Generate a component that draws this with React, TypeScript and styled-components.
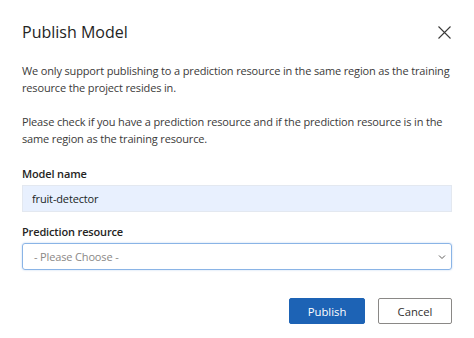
import React from "react"
import styled, { createGlobalStyle } from "styled-components"

const GlobalStyle = createGlobalStyle`
  html, body {
    margin: 0;
    background: #ffffff;
  }
  body {
    font-family: "Open Sans", "Noto Sans", sans-serif;
    color: #323130;
  }
`

const Dialog = styled.div`
  width: 474px;
  height: 338px;
  box-sizing: border-box;
  padding: 18px 22px 0 22px;
  display: flex;
  flex-direction: column;
`

const Header = styled.div`
  display: flex;
  align-items: center;
  justify-content: space-between;
  height: 28px;
`

const Title = styled.h1`
  margin: 0;
  font-size: 16px;
  font-weight: 400;
  color: #252423;
`

const CloseButton = styled.button`
  border: 0;
  background: transparent;
  padding: 0;
  width: 16px;
  height: 16px;
  display: flex;
  align-items: center;
  justify-content: center;
  cursor: pointer;
`

const Paragraph = styled.p`
  margin: 0;
  font-size: 11px;
  letter-spacing: -0.15px;
  line-height: 16.5px;
  color: #3b3a39;
  &:first-of-type {
    margin-top: 17px;
  }
  & + & {
    margin-top: 18px;
  }
`

const Field = styled.div<{ $top: number }>`
  display: flex;
  flex-direction: column;
  gap: 3px;
  margin-top: ${(p) => p.$top}px;
`

const Label = styled.label`
  font-size: 11px;
  letter-spacing: -0.15px;
  font-weight: 600;
  color: #252423;
  line-height: 16px;
`

const TextInput = styled.input`
  box-sizing: border-box;
  height: 27px;
  border: 1px solid #e3e8f0;
  background: #e8f0fe;
  padding: 0 9px;
  font-family: inherit;
  font-size: 11px;
  letter-spacing: -0.15px;
  color: #201f1e;
  border-radius: 0;
  outline: none;
`

const SelectBox = styled.div`
  position: relative;
  height: 27px;
  box-sizing: border-box;
  border: 1px solid #8ab4e6;
  border-radius: 3px;
  box-shadow: 0 0 2px rgba(100, 150, 220, 0.45);
  display: flex;
  align-items: center;
  padding: 0 11px;
  font-size: 11px;
  letter-spacing: -0.15px;
  color: #8a8886;
`

const Chevron = styled.svg`
  position: absolute;
  right: 5px;
  top: 10px;
`

const Actions = styled.div`
  display: flex;
  justify-content: flex-end;
  gap: 13px;
  margin-top: 28px;
`

const Button = styled.button<{ $primary?: boolean }>`
  box-sizing: border-box;
  width: ${(p) => (p.$primary ? 76 : 74)}px;
  height: 26px;
  border-radius: 2px;
  font-family: inherit;
  font-size: 11.3px;
  cursor: pointer;
  border: 1px solid ${(p) => (p.$primary ? "#1d63b5" : "#8a8886")};
  background: ${(p) => (p.$primary ? "#1d63b5" : "#ffffff")};
  color: ${(p) => (p.$primary ? "#ffffff" : "#323130")};
`

export default function App() {
  return (
    <>
      <GlobalStyle />
      <Dialog>
        <Header>
          <Title>Publish Model</Title>
          <CloseButton aria-label="Close">
            <svg width="13" height="13" viewBox="0 0 13 13">
              <path d="M0.5 0.5 L12.5 12.5 M12.5 0.5 L0.5 12.5" stroke="#3b3a39" strokeWidth="1.1" />
            </svg>
          </CloseButton>
        </Header>
        <Paragraph>
          We only support publishing to a prediction resource in the same region as the training
          resource the project resides in.
        </Paragraph>
        <Paragraph>
          Please check if you have a prediction resource and if the prediction resource is in the
          same region as the training resource.
        </Paragraph>
        <Field $top={19}>
          <Label>Model name</Label>
          <TextInput defaultValue="fruit-detector" />
        </Field>
        <Field $top={12}>
          <Label>Prediction resource</Label>
          <SelectBox>
            - Please Choose -
            <Chevron width="8" height="6" viewBox="0 0 8 6">
              <path d="M1 1.5 L4 4.5 L7 1.5" fill="none" stroke="#605e5c" strokeWidth="1" />
            </Chevron>
          </SelectBox>
        </Field>
        <Actions>
          <Button $primary>Publish</Button>
          <Button>Cancel</Button>
        </Actions>
      </Dialog>
    </>
  )
}
